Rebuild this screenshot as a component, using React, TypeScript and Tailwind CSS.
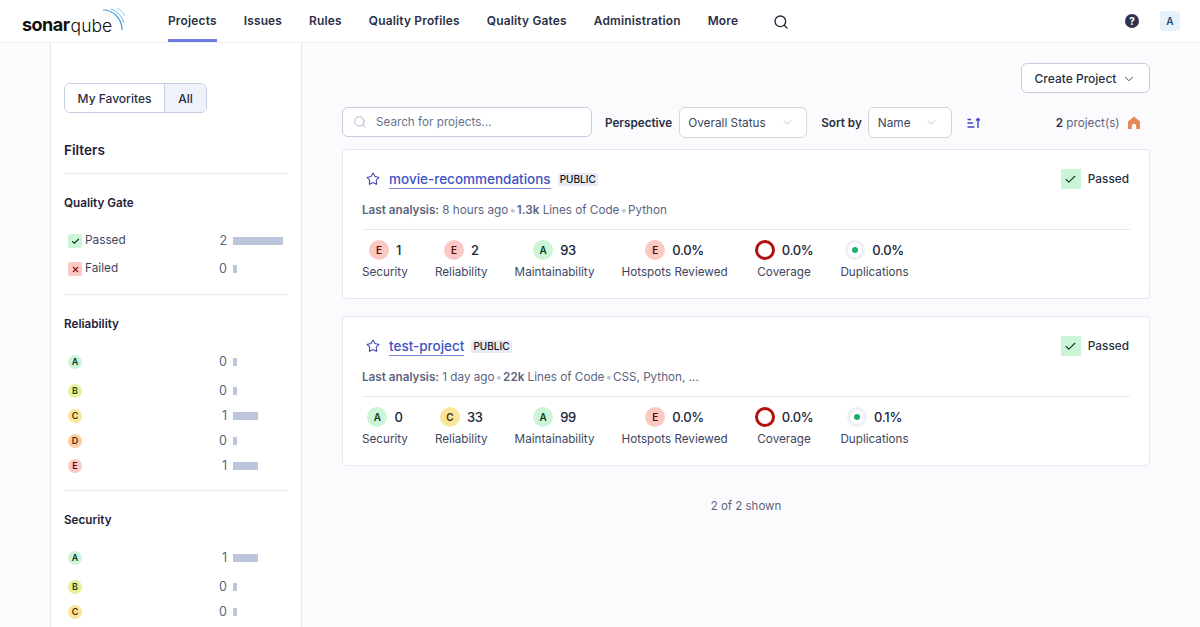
import { ChevronDown, Search, Star, Check, X } from "lucide-react";

const navItems = ["Projects", "Issues", "Rules", "Quality Profiles", "Quality Gates", "Administration", "More"];

const ratingColors: Record<string, string> = {
  A: "bg-[#ccf5d8] text-[#0b3d1c]",
  B: "bg-[#e3f29b] text-[#2f3d05]",
  C: "bg-[#fbe59b] text-[#4a2c04]",
  D: "bg-[#fbcda3] text-[#5a1f04]",
  E: "bg-[#fbc9c4] text-[#5a0b0b]",
};

function Rating({ value, big }: { value: string; big?: boolean }) {
  return (
    <span
      className={`grid shrink-0 place-items-center rounded-full font-semibold ${ratingColors[value]} ${
        big ? "h-5 w-5 text-[10px]" : "h-[14px] w-[14px] text-[9px]"
      }`}
    >
      {value}
    </span>
  );
}

function Count({ n, width }: { n: number; width: string }) {
  return (
    <div className="flex items-center">
      <span className="w-[16px] pt-[1px] text-right text-[12.5px] text-[#5b6480]">{n}</span>
      <span className={`ml-[6px] h-2 bg-[#bcc6da] ${width}`} />
    </div>
  );
}

function FacetRow({ className, label, n, width }: { className: string; label: React.ReactNode; n: number; width: string }) {
  return (
    <div className={`flex items-center justify-between pl-1 ${className}`}>
      <div className="flex items-center gap-[3px] text-[11.8px] text-[#3e4660]">{label}</div>
      <div className="w-[77px]">
        <Count n={n} width={width} />
      </div>
    </div>
  );
}

function Facet({ title, rows, last }: { title: string; rows: { v: string; n: number; w: string; h: string }[]; last?: boolean }) {
  return (
    <section className={last ? "" : "border-b border-[#e8eaf0] pb-[12px]"}>
      <h3 className="pt-[19px] text-[11.7px] font-semibold leading-[20px] text-[#1e2236]">{title}</h3>
      <div className="mt-[15px]">
        {rows.map((r, i) => (
          <FacetRow key={i} className={r.h} label={<Rating value={r.v} />} n={r.n} width={r.w} />
        ))}
      </div>
    </section>
  );
}

function Metric({ icon, value, label }: { icon: React.ReactNode; value: string; label: string }) {
  return (
    <div className="flex flex-col items-center">
      <div className="flex h-5 items-center gap-[7px]">
        {icon}
        <span className="pt-[1px] text-[13px] font-medium tracking-[-0.3px] text-[#20253a]">{value}</span>
      </div>
      <div className="mt-[2px] whitespace-nowrap text-[11.7px] leading-[20px] text-[#3e4660]">{label}</div>
    </div>
  );
}

function CoverageRing() {
  return <span className="h-5 w-5 rounded-full border-[3px] border-[#b3100f] bg-white" />;
}

function DupDot() {
  return (
    <span className="grid h-5 w-5 place-items-center rounded-full border-[3px] border-[#eef0f7] bg-white">
      <span className="h-[6px] w-[6px] rounded-full bg-[#17b26a]" />
    </span>
  );
}

function ProjectCard({
  name,
  meta,
  metrics,
}: {
  name: string;
  meta: React.ReactNode;
  metrics: { icon: React.ReactNode; value: string; label: string }[];
}) {
  return (
    <article className="h-[150px] rounded-[4px] border border-[#e5e8f2] bg-white px-[19px] pt-[19px]">
      <div className="flex h-5 items-center justify-between">
        <div className="flex items-center">
          <Star className="ml-[4px] h-[14px] w-[14px] text-[#3a46a8]" strokeWidth={1.8} />
          <a className="ml-[9px] border-b border-[#7b86e0] pt-[1px] text-[13.5px] font-medium leading-[18px] text-[#4153c4]">{name}</a>
          <span className="ml-[7px] rounded-[2px] bg-[#e8ebf5] px-[2px] text-[10px] font-medium leading-[13px] text-[#111526]">PUBLIC</span>
        </div>
        <div className="mr-[1px] flex items-center">
          <span className="grid h-5 w-5 place-items-center bg-[#ccf5d8]">
            <Check className="h-[13px] w-[13px] text-[#0b3d1c]" strokeWidth={2} />
          </span>
          <span className="ml-[7px] pt-[2px] text-[11.8px] font-medium text-[#2a2f45]">Passed</span>
        </div>
      </div>
      <div className="mt-[11px] h-[20px] text-[11.7px] leading-[20px] text-[#5b6480]">{meta}</div>
      <div className="mt-[9px] flex gap-[27px] border-t border-[#e5e8f2] pt-[10px]">
        {metrics.map((m) => (
          <Metric key={m.label} {...m} />
        ))}
      </div>
    </article>
  );
}

const Dot = () => <span className="mx-[1px] text-[#bcc6da]">•</span>;

export default function App() {
  return (
    <div className="flex h-[627px] w-[1200px] flex-col overflow-hidden bg-[#fbfbfd] font-['Inter',sans-serif]">
      <header className="flex h-[43px] shrink-0 items-stretch border-b border-[#eeeff3] bg-white">
        <div className="ml-[22px] flex w-[146px] items-start pt-[4px]">
          <div className="flex h-[30px] items-end leading-none text-[#111]">
            <span className="text-[18px] font-bold tracking-[-0.5px]">sonar</span>
            <span className="ml-[1px] text-[17.5px] font-light">qube</span>
            <svg viewBox="0 0 22 22" className="-ml-[9px] mb-[4px] h-[22px] w-[22px]" fill="none" stroke="#3f9fdc">
              <path d="M0 2C10 2 19 10 19 22" strokeWidth="1.2" />
              <path d="M8 1C14 3 19 8 21 15" strokeWidth="0.8" />
              <path d="M14 0C17 2 20 4 22 8" strokeWidth="0.6" />
            </svg>
          </div>
        </div>
        <nav className="flex gap-[27px]">
          {navItems.map((item) => (
            <a
              key={item}
              className={`flex items-center border-b-[3px] pt-[2px] text-[11.9px] font-semibold tracking-[0.2px] text-[#2a2f45] ${
                item === "Projects" ? "border-[#6f7be0]" : "border-transparent"
              }`}
            >
              {item}
            </a>
          ))}
        </nav>
        <div className="ml-[35px] flex items-center pt-[1px]">
          <Search className="h-4 w-4 text-[#20253a]" strokeWidth={2} />
        </div>
        <div className="ml-auto mr-[20px] flex items-center gap-[21px]">
          <svg viewBox="0 0 14 14" className="h-[14px] w-[14px]">
            <circle cx="7" cy="7" r="7" fill="#2e3350" />
            <text x="7" y="10.6" textAnchor="middle" fontSize="10" fontWeight="700" fill="#fff" fontFamily="Inter">?</text>
          </svg>
          <span className="grid h-5 w-5 place-items-center rounded-[3px] bg-[#e6f2fb] text-[10px] font-semibold text-[#1d4a75]">A</span>
        </div>
      </header>

      <div className="flex min-h-0 flex-1">
        <aside className="ml-[50px] h-full w-[252px] shrink-0 overflow-hidden border-x border-[#e3e7f3] bg-white pl-[13px] pr-[13px] pt-[40px]">
          <div className="flex h-[30px] w-[143px] overflow-hidden rounded-[6px] border border-[#c5cde0] text-[12px] font-medium text-[#2a2f45]">
            <span className="flex w-[100px] items-center justify-center border-r border-[#c5cde0] bg-white pt-[1px]">My Favorites</span>
            <span className="flex flex-1 items-center justify-center bg-[#eff2f9] pt-[1px]">All</span>
          </div>
          <h2 className="mt-[27px] border-b border-[#e8eaf0] pb-[13px] text-[13.6px] font-semibold leading-[20px] text-[#1e2236]">Filters</h2>
          <section className="border-b border-[#e8eaf0] pb-[11px]">
            <h3 className="pt-[19px] text-[11.7px] font-semibold leading-[20px] text-[#1e2236]">Quality Gate</h3>
            <div className="mt-[14px]">
              <FacetRow
                className="h-[28px]"
                n={2}
                width="w-[50px]"
                label={
                  <>
                    <span className="grid h-[14px] w-[14px] place-items-center rounded-[2px] bg-[#ccf5d8]">
                      <Check className="h-[9px] w-[9px] text-[#0b3d1c]" strokeWidth={3} />
                    </span>
                    Passed
                  </>
                }
              />
              <FacetRow
                className="h-[28px]"
                n={0}
                width="w-[4px]"
                label={
                  <>
                    <span className="grid h-[14px] w-[14px] place-items-center rounded-[2px] bg-[#fbc9c4]">
                      <X className="h-[9px] w-[9px] text-[#8a1010]" strokeWidth={3} />
                    </span>
                    Failed
                  </>
                }
              />
            </div>
          </section>
          <Facet
            title="Reliability"
            rows={[
              { v: "A", n: 0, w: "w-[4px]", h: "mb-[4px] h-[25px]" },
              { v: "B", n: 0, w: "w-[4px]", h: "h-[25px]" },
              { v: "C", n: 1, w: "w-[25px]", h: "h-[25px]" },
              { v: "D", n: 0, w: "w-[4px]", h: "h-[25px]" },
              { v: "E", n: 1, w: "w-[25px]", h: "h-[25px]" },
            ]}
          />
          <Facet
            title="Security"
            rows={[
              { v: "A", n: 1, w: "w-[25px]", h: "mb-[4px] h-[25px]" },
              { v: "B", n: 0, w: "w-[4px]", h: "h-[25px]" },
              { v: "C", n: 0, w: "w-[4px]", h: "h-[25px]" },
            ]}
            last
          />
        </aside>

        <main className="ml-[40px] w-[808px] pt-[20px]">
          <div className="flex justify-end">
            <button className="flex h-[30px] w-[129px] items-center justify-center gap-[6px] rounded-[6px] border border-[#c5cde0] bg-white pt-[1px] text-[12px] font-medium text-[#2a2f45]">
              Create Project
              <ChevronDown className="h-[14px] w-[14px]" strokeWidth={1.5} />
            </button>
          </div>

          <div className="mt-[14px] flex h-[31px] items-center whitespace-nowrap">
            <div className="flex h-[30px] w-[250px] shrink-0 items-center self-start rounded-[6px] border border-[#c5cde0] bg-white pl-[10px]">
              <Search className="h-[14px] w-[14px] text-[#a3acc2]" strokeWidth={1.5} />
              <span className="ml-[9px] pt-[2px] text-[11.7px] text-[#6a7390]">Search for projects...</span>
            </div>
            <span className="ml-[13px] pt-[2px] text-[11.7px] font-semibold text-[#2a2f45]">Perspective</span>
            <div className="ml-[7px] flex h-[31px] w-[128px] shrink-0 items-center justify-between rounded-[6px] border border-[#d4d6dc] bg-white pl-[8px] pr-[12px] text-[11.8px] text-[#3e4660]">
              <span className="pt-[2px]">Overall Status</span>
              <ChevronDown className="h-[13px] w-[13px] text-[#b4bac8]" strokeWidth={1.5} />
            </div>
            <span className="ml-[14px] pt-[2px] text-[11.7px] font-semibold text-[#2a2f45]">Sort by</span>
            <div className="ml-[6px] flex h-[31px] w-[84px] shrink-0 items-center justify-between rounded-[6px] border border-[#d4d6dc] bg-white pl-[9px] pr-[13px] text-[11.8px] text-[#3e4660]">
              <span className="pt-[2px]">Name</span>
              <ChevronDown className="h-[13px] w-[13px] text-[#b4bac8]" strokeWidth={1.5} />
            </div>
            <svg viewBox="0 0 14 12" className="ml-[15px] h-[12px] w-[14px] shrink-0" fill="none" stroke="#3a46c8" strokeWidth="1.4">
              <path d="M0.5 2.5H4M0.5 6H6M0.5 10H7.5M11 11V1.5M9 3.5L11 1.5L13 3.5" />
            </svg>
            <span className="ml-[75px] pt-[2px] text-[11.7px] text-[#5b6480]">
              <b className="font-semibold text-[#2a2f45]">2</b> project(s)
            </span>
            <svg viewBox="0 0 12 13" className="ml-[8px] h-[13px] w-[12px] shrink-0" fill="#e8875c">
              <path d="M6 0.5L12 5.5V13H8.2V10C8.2 8.7 7.2 7.8 6 7.8C4.8 7.8 3.8 8.7 3.8 10V13H0V5.5Z" />
            </svg>
          </div>

          <div className="mt-[11px] flex flex-col gap-[17px]">
            <ProjectCard
              name="movie-recommendations"
              meta={
                <>
                  <b className="font-semibold">Last analysis:</b> 8 hours ago
                  <Dot />
                  <b className="font-semibold">1.3k</b> Lines of Code
                  <Dot />
                  Python
                </>
              }
              metrics={[
                { icon: <Rating value="E" big />, value: "1", label: "Security" },
                { icon: <Rating value="E" big />, value: "2", label: "Reliability" },
                { icon: <Rating value="A" big />, value: "93", label: "Maintainability" },
                { icon: <Rating value="E" big />, value: "0.0%", label: "Hotspots Reviewed" },
                { icon: <CoverageRing />, value: "0.0%", label: "Coverage" },
                { icon: <DupDot />, value: "0.0%", label: "Duplications" },
              ]}
            />
            <ProjectCard
              name="test-project"
              meta={
                <>
                  <b className="font-semibold">Last analysis:</b> 1 day ago
                  <Dot />
                  <b className="font-semibold">22k</b> Lines of Code
                  <Dot />
                  CSS, Python, ...
                </>
              }
              metrics={[
                { icon: <Rating value="A" big />, value: "0", label: "Security" },
                { icon: <Rating value="C" big />, value: "33", label: "Reliability" },
                { icon: <Rating value="A" big />, value: "99", label: "Maintainability" },
                { icon: <Rating value="E" big />, value: "0.0%", label: "Hotspots Reviewed" },
                { icon: <CoverageRing />, value: "0.0%", label: "Coverage" },
                { icon: <DupDot />, value: "0.1%", label: "Duplications" },
              ]}
            />
          </div>

          <div className="mt-[30px] text-center text-[11.5px] leading-[20px] text-[#5b6480]">2 of 2 shown</div>
        </main>
      </div>
    </div>
  );
}
